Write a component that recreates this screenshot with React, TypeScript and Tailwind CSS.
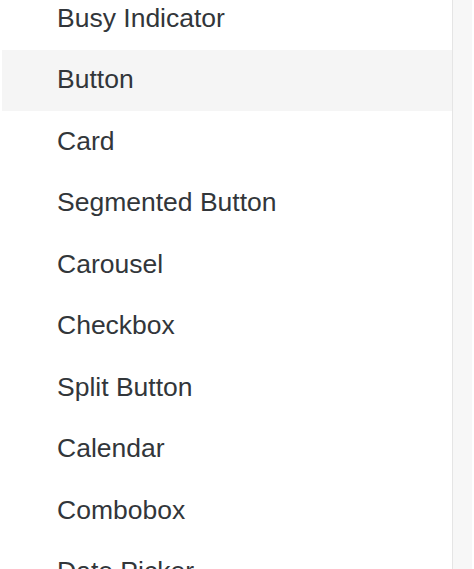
const items = [
  "Busy Indicator",
  "Button",
  "Card",
  "Segmented Button",
  "Carousel",
  "Checkbox",
  "Split Button",
  "Calendar",
  "Combobox",
  "Date Picker",
];

export default function App() {
  return (
    <div className="flex h-[569px] w-[474px] overflow-hidden bg-white">
      <ul className="-mt-[12px] flex w-[453px] flex-col border-r border-[#e5e5e5] pl-[2px]">
        {items.map((label) => (
          <li
            key={label}
            className={
              "flex h-[61.5px] shrink-0 items-center pl-[55px] text-[26.5px] text-[#32363a] [font-family:'Liberation_Sans',Arial,sans-serif] " +
              (label === "Button" ? "bg-[#f5f5f5]" : "")
            }
          >
            {label}
          </li>
        ))}
      </ul>
      <div className="w-[19px] bg-[#f7f7f7]" />
    </div>
  );
}
